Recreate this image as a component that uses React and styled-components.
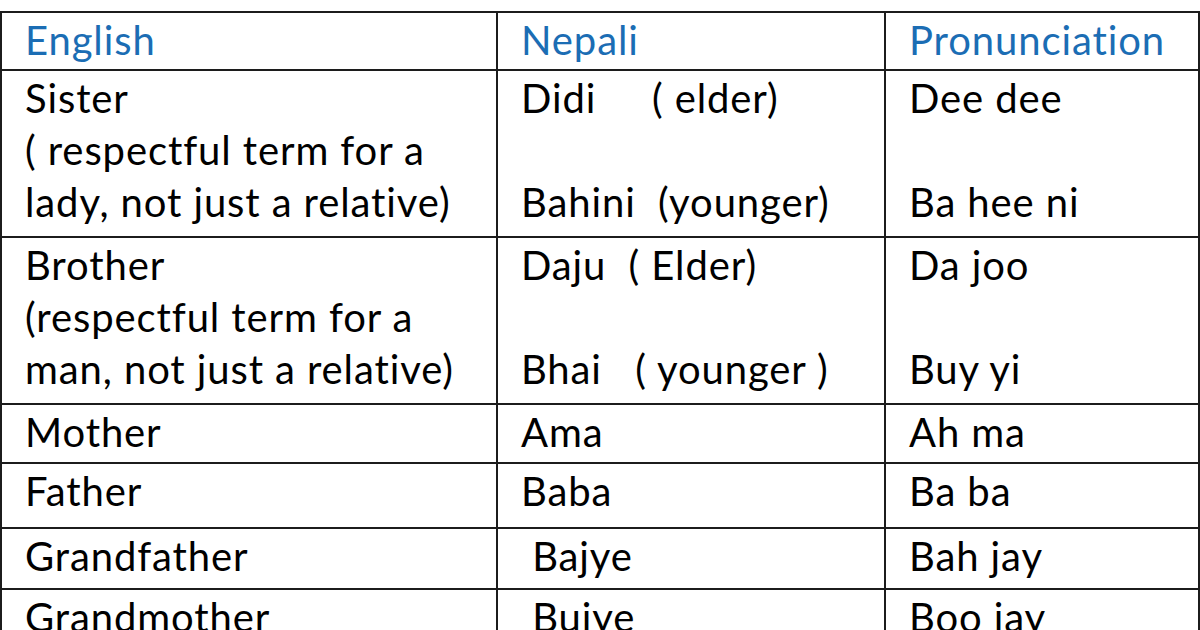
import React from "react";
import styled, { createGlobalStyle } from "styled-components";

const GlobalStyle = createGlobalStyle`
  html, body {
    margin: 0;
    padding: 0;
    background: #ffffff;
    overflow: hidden;
  }
`;

const Page = styled.div`
  width: 1200px;
  height: 630px;
  overflow: hidden;
  padding-top: 11px;
  box-sizing: border-box;
`;

const Table = styled.table`
  width: 1198px;
  border-collapse: collapse;
  table-layout: fixed;
  font-family: Lato, "Liberation Sans", sans-serif;
  font-size: 40px;
  line-height: 52px;
  letter-spacing: 0.9px;
  font-variant-ligatures: none;
  font-feature-settings: "liga" 0, "clig" 0;
  color: #000;
`;

const Col = styled.col`
  width: ${(p) => p.$w}px;
`;

const Row = styled.tr`
  height: ${(p) => p.$h}px;
`;

const HeadCell = styled.th`
  border: 2px solid #1c1c1c;
  padding: 1px 0 0 23px;
  vertical-align: top;
  text-align: left;
  font-weight: 400;
  color: #1b6db4;
  white-space: pre;
`;

const Cell = styled.td`
  border: 2px solid #1c1c1c;
  padding: 1px 0 0 23px;
  vertical-align: top;
  white-space: pre;
`;

const Line = styled.div`
  height: 52px;
`;

const rows = [
  {
    h: 167,
    cells: [
      ["Sister", "( respectful term for a", "lady, not just a relative)"],
      ["Didi     ( elder)", "", "Bahini  (younger)"],
      ["Dee dee", "", "Ba hee ni"],
    ],
  },
  {
    h: 167,
    cells: [
      ["Brother", "(respectful term for a", "man, not just a relative)"],
      ["Daju  ( Elder)", "", "Bhai   ( younger )"],
      ["Da joo", "", "Buy yi"],
    ],
  },
  { h: 59, cells: [["Mother"], ["Ama"], ["Ah ma"]] },
  { h: 65, cells: [["Father"], ["Baba"], ["Ba ba"]] },
  { h: 61, cells: [["Grandfather"], [" Bajye"], ["Bah jay"]] },
  { h: 61, cells: [["Grandmother"], [" Bujye"], ["Boo jay"]] },
];

export default function App() {
  return (
    <>
      <GlobalStyle />
      <Page>
        <Table>
          <colgroup>
            <Col $w={496} />
            <Col $w={388} />
            <Col $w={314} />
          </colgroup>
          <thead>
            <Row $h={58}>
              <HeadCell>English</HeadCell>
              <HeadCell>Nepali</HeadCell>
              <HeadCell>Pronunciation</HeadCell>
            </Row>
          </thead>
          <tbody>
            {rows.map((row, i) => (
              <Row key={i} $h={row.h}>
                {row.cells.map((lines, j) => (
                  <Cell key={j}>
                    {lines.map((t, k) => (
                      <Line key={k}>{t}</Line>
                    ))}
                  </Cell>
                ))}
              </Row>
            ))}
          </tbody>
        </Table>
      </Page>
    </>
  );
}
